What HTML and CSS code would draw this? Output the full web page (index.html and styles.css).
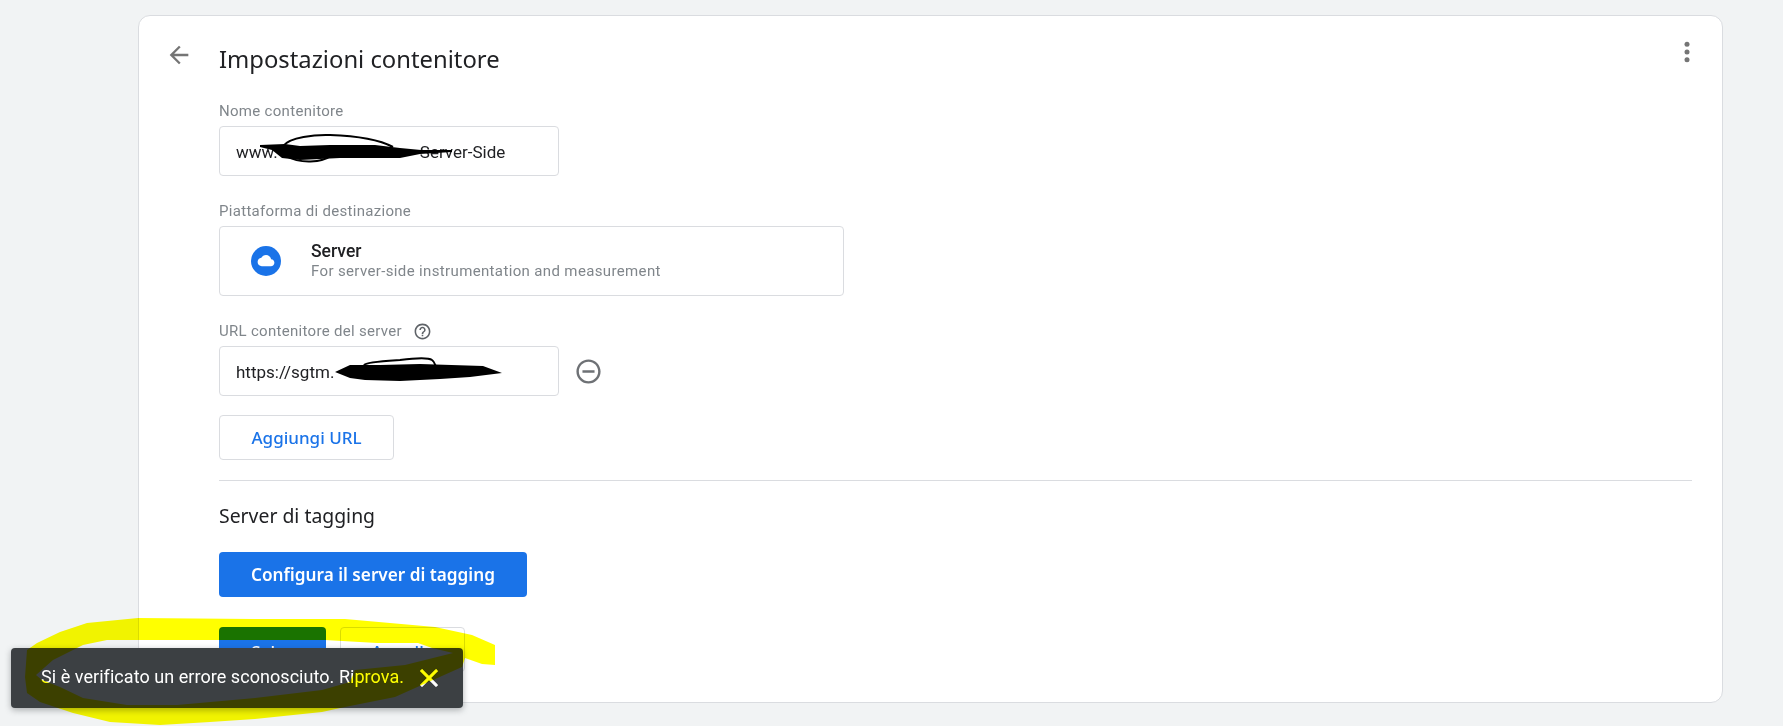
FILE: index.html
```html
<!DOCTYPE html>
<html lang="it">
<head>
<meta charset="utf-8">
<title>Impostazioni contenitore</title>
<link rel="stylesheet" href="styles.css">
</head>
<body>
<main class="card">
  <header class="card-head">
    <svg class="back" viewBox="0 0 24 24"><path d="M20 11H7.83l5.59-5.59L12 4l-8 8 8 8 1.41-1.41L7.83 13H20v-2z"/></svg>
    <h1 class="title">Impostazioni contenitore</h1>
    <svg class="kebab" viewBox="0 0 24 24"><circle cx="12" cy="4.300" r="2.500"/><circle cx="12" cy="12" r="2.500"/><circle cx="12" cy="19.700" r="2.500"/></svg>
  </header>
  <section class="content">
    <label class="label">Nome contenitore</label>
    <div class="input input-name">www.<span class="gap-name"></span>Server-Side</div>

    <label class="label label-platform">Piattaforma di destinazione</label>
    <div class="platform">
      <svg class="cloud" viewBox="0 0 30 30"><circle cx="15" cy="15" r="15" fill="#1a73e8"/><path transform="translate(6.600 6.200) scale(.7)" fill="#fff" d="M19.35 10.04C18.67 6.59 15.64 4 12 4 9.11 4 6.6 5.64 5.35 8.04 2.34 8.36 0 10.91 0 14c0 3.31 2.69 6 6 6h13c2.76 0 5-2.24 5-5 0-2.64-2.05-4.78-4.65-4.96z"/></svg>
      <div class="platform-text">
        <div class="platform-name">Server</div>
        <div class="platform-desc">For server-side instrumentation and measurement</div>
      </div>
    </div>

    <div class="label label-url">URL contenitore del server
      <svg class="help" viewBox="0 0 24 24"><path d="M11 18h2v-2h-2v2zm1-16C6.48 2 2 6.48 2 12s4.48 10 10 10 10-4.48 10-10S17.52 2 12 2zm0 18c-4.41 0-8-3.59-8-8s3.59-8 8-8 8 3.59 8 8-3.59 8-8 8zm0-14c-2.21 0-4 1.79-4 4h2c0-1.1.9-2 2-2s2 .9 2 2c0 2-3 1.75-3 5h2c0-2.25 3-2.5 3-5 0-2.21-1.79-4-4-4z"/></svg>
    </div>
    <div class="url-row">
      <div class="input">https://sgtm.</div>
      <svg class="remove" viewBox="0 0 24 24"><path d="M7 11v2h10v-2H7zm5-9C6.48 2 2 6.48 2 12s4.48 10 10 10 10-4.48 10-10S17.52 2 12 2zm0 18c-4.41 0-8-3.59-8-8s3.59-8 8-8 8 3.59 8 8-3.59 8-8 8z"/></svg>
    </div>
    <button class="btn btn-outline btn-add">Aggiungi URL</button>

    <hr class="divider">
    <h2 class="subtitle">Server di tagging</h2>
    <button class="btn btn-primary btn-config">Configura il server di tagging</button>
    <div class="actions">
      <button class="btn btn-primary btn-save">Salva</button>
      <button class="btn btn-outline btn-cancel">Annulla</button>
    </div>
  </section>
</main>

<div class="toast">
  <span class="toast-text">Si è verificato un errore sconosciuto. Riprova.</span>
  <svg class="toast-close" viewBox="0 0 24 24"><path d="M19 6.41L17.59 5 12 10.59 6.41 5 5 6.41 10.59 12 5 17.59 6.41 19 12 13.41 17.59 19 19 17.59 13.41 12z"/></svg>
</div>

<svg class="markup" viewBox="0 0 1783 726" width="1783" height="726">
  <g class="ink">
    <path d="M260 145L285 144L300 146L330 145L375 145L400 148L421 150L452 150V152L420 154L400 158L340 158L300 160L282 158L272 150L260 147Z"/>
    <path class="ink-line" d="M283 146C290 137 315 134.500 330 135C360 136 380 140 393 147M286 156C300 164 322 163 332 155"/>
    <path d="M335 372L350 365L380 365L420 364L483 366L502 373L470 377L440 379L400 381L365 380L350 378Z"/>
    <path class="ink-line" d="M364 365C366 362 385 361 400 360C415 358 428 357 432 360C435 362 435 365 436 367"/>
  </g>
  <path class="highlight" d="M25 677L27 650L37 643L60 632L87 623L138 618L255 619L345 619L435 627L472 635L495 645L495 665L482 664L465 658L462 667L395 697L345 707L322 712L255 719L210 722L160 725L110 722L73 713L40 702L27 693Z M36 675L42 680L60 687L83 698L127 705L177 705L255 698L322 690L350 682L355 670L405 665L453 653L432 648L418 643L377 643L325 640L138 640L107 640L83 645L53 660Z" fill-rule="evenodd"/>
</svg>
</body>
</html>
```
FILE: styles.css
```css
* { box-sizing: border-box; }
html, body { margin: 0; height: 726px; overflow: hidden; }
body {
  background: #f1f3f4;
  font-family: Roboto, "Liberation Sans", sans-serif;
  color: #202124;
  padding: 15px 60px 0 138px;
  position: relative;
}
.card {
  height: 688px;
  background: #fff;
  border: 1px solid #dadce0;
  border-radius: 12px;
  position: relative;
}
.card-head {
  display: flex;
  align-items: flex-start;
  height: 50px;
  padding: 20px 23px 0 26px;
}
.back { width: 28px; height: 28px; fill: #757575; flex: none; margin-top: 5px; }
.title {
  margin: 7px 0 0 26px;
  font: 400 23.800px/32px "Noto Sans", sans-serif;
  color: #202124;
  flex: 1;
}
.kebab { width: 24px; height: 24px; fill: #757575; flex: none; margin-top: 4px; }
.content { padding: 0 30px 0 80px; }
.label {
  display: block;
  font-size: 15px;
  line-height: 20px;
  letter-spacing: .3px;
  color: #80868b;
}
.content > .label:first-child { margin-top: 35px; }
.input {
  width: 340px;
  height: 50px;
  border: 1px solid #dadce0;
  border-radius: 4px;
  font-size: 17px;
  line-height: 50px;
  padding-left: 16px;
  margin-top: 5px;
  white-space: nowrap;
}
.gap-name { display: inline-block; width: 142px; }
.label-platform { margin-top: 25px; }
.platform {
  width: 625px;
  height: 70px;
  margin-top: 5px;
  border: 1px solid #dadce0;
  border-radius: 4px;
  display: flex;
  align-items: center;
  padding-left: 31px;
}
.cloud { width: 30px; height: 30px; flex: none; }
.platform-text { margin-left: 30px; }
.platform-name { font-size: 17.500px; line-height: 20px; font-weight: 500; }
.platform-desc { font-size: 15px; line-height: 20px; letter-spacing: .36px; color: #80868b; }
.label-url { margin-top: 25px; display: flex; align-items: center; }
.help { width: 19px; height: 19px; fill: #5f6368; margin-left: 11px; }
.url-row { display: flex; align-items: center; }
.remove { width: 29px; height: 29px; fill: #6e7175; margin: 5px 0 0 15px; }
.btn {
  display: block;
  border-radius: 4px;
  font: 500 17px/20px "Noto Sans", sans-serif;
  border: 1px solid transparent;
  padding: 0;
}
.btn-outline { background: #fff; border-color: #dadce0; color: #1a73e8; }
.btn-primary { background: #1a73e8; color: #fff; }
.btn-add { width: 175px; height: 45px; margin-top: 19px; }
.divider { border: 0; border-top: 1px solid #dadce0; margin: 20px 0 0; }
.subtitle {
  margin: 24px 0 0;
  font: 400 19.400px/22px "Noto Sans", sans-serif;
  color: #202124;
}
.btn-config { width: 308px; height: 45px; margin-top: 25px; font-size: 17.200px; font-weight: 600; }
.actions { display: flex; gap: 14px; margin-top: 30px; }
.btn-save, .btn-cancel { height: 45px; padding-top: 5px; }
.btn-save { width: 107px; }
.btn-cancel { width: 125px; }
.toast {
  position: absolute;
  left: 11px;
  top: 648px;
  width: 452px;
  height: 60px;
  background: #3c4043;
  border-radius: 4px;
  box-shadow: 0 2px 6px rgba(60, 64, 67, .4);
  color: #fff;
  display: flex;
  align-items: center;
  padding-left: 30px;
}
.toast-text { font-size: 18px; letter-spacing: .05px; white-space: nowrap; margin-bottom: 3px; }
.toast-close { width: 30px; height: 30px; fill: #fff; stroke: #fff; stroke-width: .6; margin-left: 10px; flex: none; }
.markup {
  position: absolute;
  left: 0;
  top: 0;
  pointer-events: none;
  mix-blend-mode: multiply;
}
.ink path { fill: #000; }
.ink .ink-line { fill: none; stroke: #000; stroke-width: 2; }
.highlight { fill: #ff0; }
```
